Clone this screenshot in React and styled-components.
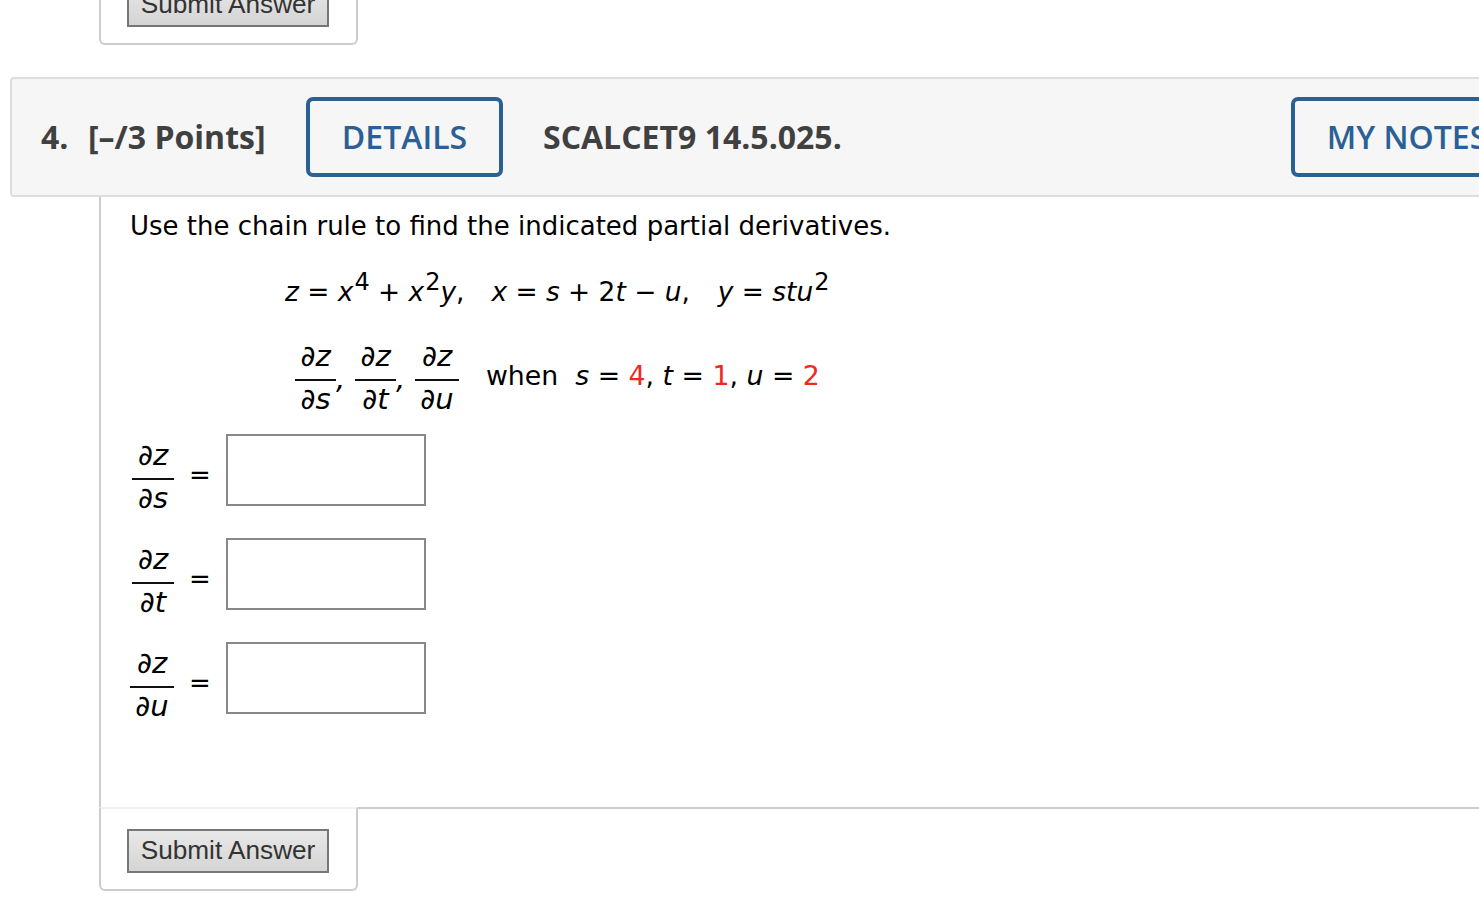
import React from 'react';
import styled, { createGlobalStyle } from 'styled-components';

const GlobalStyle = createGlobalStyle`
  html, body {
    margin: 0;
    padding: 0;
    background: #fff;
    overflow: hidden;
  }
`;

const Page = styled.div`
  width: 1479px;
  height: 918px;
  overflow: hidden;
  font-family: "DejaVu Sans", Verdana, sans-serif;
  color: #000;
`;

const PrevTab = styled.div`
  box-sizing: border-box;
  display: flow-root;
  width: 259px;
  height: 45px;
  margin-left: 99px;
  padding-left: 26px;
  border: 2px solid #ccc;
  border-top: 0;
  border-radius: 0 0 6px 6px;
`;

const SubmitButton = styled.button`
  display: block;
  box-sizing: border-box;
  width: 202px;
  height: 44px;
  margin-top: ${props => props.top || '0'};
  padding: 0 0 2px;
  border: 2px solid #767676;
  background: linear-gradient(#e8e8e8, #d4d4d4);
  font-family: "Liberation Sans", Arial, sans-serif;
  font-size: 26.2px;
  color: #333;
`;

const Header = styled.div`
  box-sizing: border-box;
  display: flex;
  align-items: center;
  width: 1640px;
  height: 120px;
  margin: 32px 0 0 10px;
  padding: 0 0 0 29px;
  background: #f6f6f6;
  border: 2px solid #ddd;
  border-radius: 4px;
  font-family: "Open Sans", sans-serif;
  font-weight: 700;
  font-size: 32px;
  color: #404040;
`;

const Number = styled.span`
  width: 47px;
  padding-bottom: 2px;
`;

const Points = styled.span`
  width: 218px;
  padding-bottom: 2px;
`;

const OutlineButton = styled.div`
  box-sizing: border-box;
  display: flex;
  align-items: center;
  justify-content: center;
  flex: none;
  width: ${props => props.width};
  height: 80px;
  padding-bottom: 2px;
  border: 4px solid #2b6095;
  border-radius: 7px;
  font-weight: 600;
  font-size: 32px;
  color: #2b6095;
`;

const Code = styled.span`
  margin-left: 40px;
  width: 748px;
  padding-bottom: 2px;
  font-weight: 700;
  white-space: nowrap;
`;

const Body = styled.div`
  box-sizing: border-box;
  height: 610px;
  margin-left: 99px;
  padding: 12px 0 0 29px;
  border-left: 2px solid #ccc;
`;

const Intro = styled.p`
  margin: 0;
  font-size: 26px;
  line-height: 34px;
  white-space: nowrap;
`;

const MathBlock = styled.div`
  display: flex;
  flex-direction: column;
  margin-left: 155px;
`;

const Line = styled.div`
  display: flex;
  align-items: center;
  font-size: ${props => props.size || '26.4px'};
  line-height: 34px;
  white-space: pre;
  margin-top: ${props => props.top};
`;

const Var = styled.i`
  font-style: italic;
`;

const Sup = styled.sup`
  font-size: 24px;
  line-height: 0;
  vertical-align: 11px;
  margin-left: 1px;
`;

const Red = styled.span`
  color: #f0291f;
`;

const Gap = styled.span`
  display: inline-block;
  width: ${props => props.width};
`;

const Fraction = styled.span`
  display: inline-flex;
  flex-direction: column;
  align-items: center;
  flex: none;
  width: ${props => props.width || '44px'};
  margin-top: ${props => props.top || '0'};
  margin-left: ${props => props.left || '0'};
  font-size: 29px;
  line-height: 38px;
  font-style: italic;
`;

const Top = styled.span`
  display: block;
  width: 100%;
  text-align: center;
  padding-bottom: 4px;
  border-bottom: 2px solid #111;
`;

const Bottom = styled.span`
  display: block;
  padding-top: 1px;
  line-height: 34px;
`;

const Comma = styled.span`
  align-self: flex-end;
  width: 19px;
  padding-bottom: 20px;
  font-size: 29px;
  font-style: italic;
`;

const When = styled.span`
  margin-left: 10px;
  padding-bottom: 2px;
`;

const Answers = styled.div`
  display: flex;
  flex-direction: column;
  gap: 32px;
  margin-top: 18px;
`;

const AnswerRow = styled.div`
  display: flex;
  align-items: center;
  height: 72px;
  font-size: 26px;
`;

const Equals = styled.span`
  box-sizing: border-box;
  width: 52px;
  padding-top: 10px;
  text-align: center;
`;

const AnswerInput = styled.input`
  box-sizing: border-box;
  width: 200px;
  height: 72px;
  padding: 0;
  border: 2px solid #888;
  background: #fff;
`;

const Footer = styled.div`
  display: flex;
  margin-left: 99px;
`;

const FooterTab = styled.div`
  box-sizing: border-box;
  flex: none;
  width: 259px;
  height: 84px;
  padding: 20px 0 0 26px;
  border: 2px solid #ccc;
  border-top: 2px solid #f0f0f0;
  border-radius: 0 0 6px 6px;
`;

const FooterRule = styled.div`
  flex: 1;
  border-top: 2px solid #ccc;
`;

const partials = [
  { v: 's', width: '41px', cell: '42px', inset: '2px' },
  { v: 't', width: '41px', cell: '42px', inset: '2px' },
  { v: 'u', width: '44px', cell: '44px', inset: '0' },
];

export default function App() {
  return (
    <Page>
      <GlobalStyle />
      <PrevTab>
        <SubmitButton top="-17px">Submit Answer</SubmitButton>
      </PrevTab>
      <Header>
        <Number>4.</Number>
        <Points>[–/3 Points]</Points>
        <OutlineButton width="197px">DETAILS</OutlineButton>
        <Code>SCALCET9 14.5.025.</Code>
        <OutlineButton width="232px">MY NOTES</OutlineButton>
      </Header>
      <Body>
        <Intro>Use the chain rule to find the indicated partial derivatives.</Intro>
        <MathBlock>
          <Line top="32px">
            <span>
              <Var>z</Var> = <Var>x</Var><Sup>4</Sup> + <Var>x</Var><Sup>2</Sup><Var>y</Var>,<Gap width="27px" />
              <Var>x</Var> = <Var>s</Var> + 2<Var>t</Var> − <Var>u</Var>,<Gap width="28px" />
              <Var>y</Var> = <Var>stu</Var><Sup>2</Sup>
            </span>
          </Line>
          <Line top="28px" size="26.74px">
            <Gap width="10px" />
            {partials.map((p, i) => (
              <React.Fragment key={p.v}>
                <Fraction width={p.width}>
                  <Top>∂z</Top>
                  <Bottom>∂{p.v}</Bottom>
                </Fraction>
                {i < 2 && <Comma>,</Comma>}
              </React.Fragment>
            ))}
            <When>
              {'  '}when{'  '}<Var>s</Var> = <Red>4</Red>, <Var>t</Var> = <Red>1</Red>, <Var>u</Var> = <Red>2</Red>
            </When>
          </Line>
        </MathBlock>
        <Answers>
          {partials.map(p => (
            <AnswerRow key={p.v}>
              <Fraction width={p.cell} left={p.inset} top="11px">
                <Top>∂z</Top>
                <Bottom>∂{p.v}</Bottom>
              </Fraction>
              <Equals>=</Equals>
              <AnswerInput />
            </AnswerRow>
          ))}
        </Answers>
      </Body>
      <Footer>
        <FooterTab>
          <SubmitButton>Submit Answer</SubmitButton>
        </FooterTab>
        <FooterRule />
      </Footer>
    </Page>
  );
}
